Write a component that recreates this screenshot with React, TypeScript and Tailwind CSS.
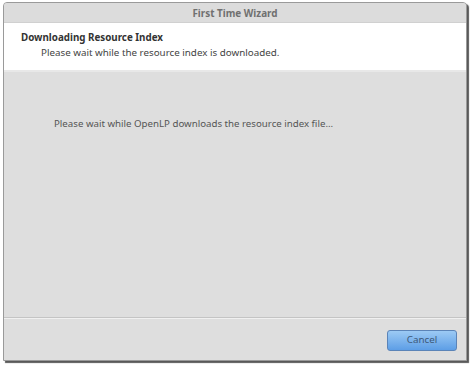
import React from "react";

function App() {
  return (
    <div className="w-[474px] h-[368px] bg-white pt-[2px] pl-[3px]" style={{ fontFamily: '"Noto Sans", "Open Sans", sans-serif' }}>
      <div className="w-[464px] h-[359px] flex flex-col border border-[#9a9a9a] rounded-t-[4px] bg-[#dedede] shadow-[2px_2px_1px_rgba(0,0,0,0.65)] overflow-hidden">
        <div className="h-[20px] shrink-0 flex items-center justify-center bg-[#dcdcdc] text-[9.9px] font-bold text-[#707070] border-b border-[#d0d0d0] pt-[1px]">
          First Time Wizard
        </div>
        <div className="h-[49px] shrink-0 bg-white pl-[17px] pt-[7px] border-b-[2px] border-[#e8e8e8]">
          <div className="text-[9.8px] font-bold text-[#333] leading-[15px]">Downloading Resource Index</div>
          <div className="text-[9.8px] text-[#444] leading-[15px] pl-[20px]">Please wait while the resource index is downloaded.</div>
        </div>
        <div className="flex-1 pl-[50px] pt-[45px] text-[9.7px] text-[#555] border-b border-[#c4c4c4]">
          Please wait while OpenLP downloads the resource index file...
        </div>
        <div className="h-[42px] shrink-0 flex items-center justify-end pr-[9px] border-t border-[#f0f0f0]">
          <button className="w-[70px] h-[21px] rounded-[3px] border border-[#5b84b8] bg-gradient-to-b from-[#9ccaf4] to-[#5d9ee6] text-[9.8px] text-[#3d5878] mt-[1px]">
            Cancel
          </button>
        </div>
      </div>
    </div>
  );
}

export default App;
